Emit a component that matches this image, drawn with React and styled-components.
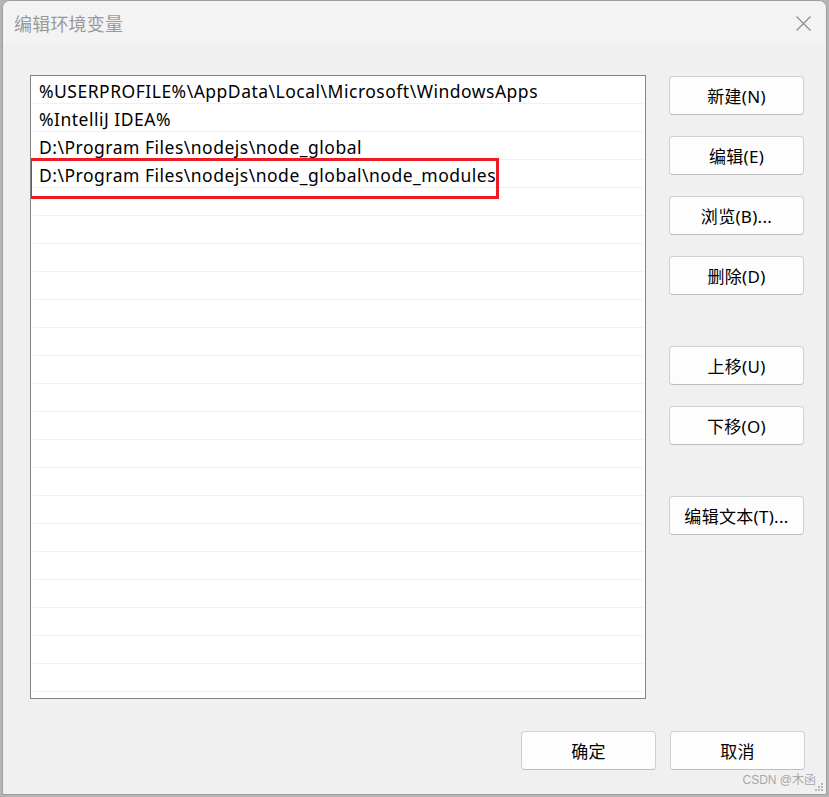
import React from 'react';
import styled, { createGlobalStyle } from 'styled-components';

const GlobalStyle = createGlobalStyle`
  html, body {
    margin: 0;
    padding: 0;
    background: #b4b4b4;
  }
  body {
    font-family: "Noto Sans", "Noto Sans CJK SC", sans-serif;
  }
`;

const paths = [
  '%USERPROFILE%\\AppData\\Local\\Microsoft\\WindowsApps',
  '%IntelliJ IDEA%',
  'D:\\Program Files\\nodejs\\node_global',
  'D:\\Program Files\\nodejs\\node_global\\node_modules',
];

const ROW_COUNT = 22;

function App() {
  const rows = Array.from({ length: ROW_COUNT }, (_, i) => paths[i] || '');

  return (
    <>
      <GlobalStyle />
      <Screen>
        <Dialog>
          <TitleBar>
            <Title>编辑环境变量</Title>
            <CloseButton aria-label="close">
              <svg width="15" height="15" viewBox="0 0 15 15">
                <path d="M0.5 0.5 L14.5 14.5 M14.5 0.5 L0.5 14.5" stroke="#8a8a8a" strokeWidth="1.1" fill="none" />
              </svg>
            </CloseButton>
          </TitleBar>

          <Body>
            <ListBox>
              {rows.map((text, i) => (
                <Row key={i}>{text}</Row>
              ))}
              {/* highlight added in screenshot */}
              <Highlight />
            </ListBox>

            <ButtonColumn>
              <Button>新建(N)</Button>
              <Button>编辑(E)</Button>
              <Button>浏览(B)...</Button>
              <Button>删除(D)</Button>
              <Button $gap={51}>上移(U)</Button>
              <Button>下移(O)</Button>
              <Button $gap={51}>编辑文本(T)...</Button>
            </ButtonColumn>
          </Body>

          <Footer>
            <Button>确定</Button>
            <Button>取消</Button>
          </Footer>

          <Watermark>CSDN @木函</Watermark>
          <Grip>
            <svg width="10" height="10" viewBox="0 0 10 10" fill="#b8b8b8">
              <rect x="7" y="1" width="2" height="2" />
              <rect x="4" y="4" width="2" height="2" />
              <rect x="7" y="4" width="2" height="2" />
              <rect x="1" y="7" width="2" height="2" />
              <rect x="4" y="7" width="2" height="2" />
              <rect x="7" y="7" width="2" height="2" />
            </svg>
          </Grip>
        </Dialog>
      </Screen>
    </>
  );
}

export default App;

const Screen = styled.div`
  width: 829px;
  height: 797px;
  padding-left: 2px;
  box-sizing: border-box;
`;

const Dialog = styled.div`
  position: relative;
  width: 825px;
  height: 795px;
  box-sizing: border-box;
  background: #f0f0f0;
  border: 1px solid #9c9c9c;
  border-radius: 8px 8px 0 0;
  overflow: hidden;
  display: flex;
  flex-direction: column;
`;

const TitleBar = styled.div`
  height: 44px;
  flex-shrink: 0;
  background: #f3f3f3;
  display: flex;
  align-items: center;
  justify-content: space-between;
  padding: 0 15px 0 11px;
`;

const Title = styled.div`
  font-size: 18px;
  color: #9a9a9a;
  letter-spacing: 0.2px;
`;

const CloseButton = styled.div`
  width: 15px;
  height: 15px;
  display: flex;
`;

const Body = styled.div`
  display: flex;
  align-items: flex-start;
  padding: 30px 0 0 27px;
  gap: 23px;
`;

const ListBox = styled.div`
  position: relative;
  width: 616px;
  height: 624px;
  box-sizing: border-box;
  background: #ffffff;
  border: 1px solid #82848c;
  display: flex;
  flex-direction: column;
  padding: 0 2px;
  overflow: hidden;
`;

const Row = styled.div`
  height: 28px;
  flex-shrink: 0;
  box-sizing: border-box;
  border-bottom: 1px solid #f0f0f0;
  padding-left: 6px;
  font-size: 17.5px;
  letter-spacing: 0.5px;
  line-height: 30px;
  color: #000;
  white-space: nowrap;
`;

const Highlight = styled.div`
  position: absolute;
  left: -2px;
  top: 82px;
  width: 470px;
  height: 41px;
  box-sizing: border-box;
  border: 3px solid #ec1c24;
`;

const ButtonColumn = styled.div`
  display: flex;
  flex-direction: column;
  gap: 21px;
  padding-top: 1px;
`;

const Button = styled.div`
  width: 135px;
  height: 39px;
  box-sizing: border-box;
  background: #fdfdfd;
  border: 1px solid #d0d0d0;
  border-bottom-color: #bdbdbd;
  border-radius: 4px;
  display: flex;
  align-items: center;
  justify-content: center;
  font-size: 17px;
  letter-spacing: 0.3px;
  color: #000;
  margin-top: ${props => (props.$gap ? props.$gap - 21 : 0)}px;
`;

const Footer = styled.div`
  display: flex;
  justify-content: flex-end;
  gap: 14px;
  padding: 0 21px 0 0;
  margin-top: 32px;
`;

const Watermark = styled.div`
  position: absolute;
  right: 10px;
  bottom: 7px;
  font-family: "Liberation Sans", "Noto Sans CJK SC", sans-serif;
  font-size: 12px;
  color: #a8a8a8;
`;

const Grip = styled.div`
  position: absolute;
  right: 2px;
  bottom: 2px;
  width: 10px;
  height: 10px;
  display: flex;
`;
